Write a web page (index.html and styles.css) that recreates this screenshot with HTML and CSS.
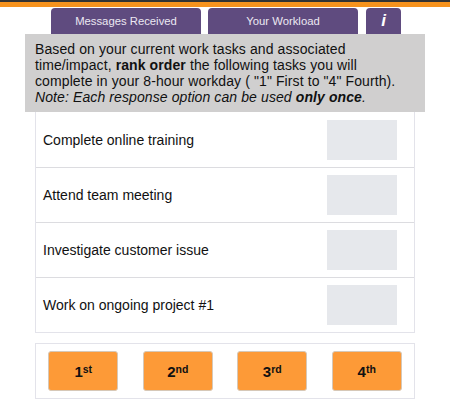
FILE: index.html
```html
<!DOCTYPE html>
<html>
<head>
<meta charset="utf-8">
<link rel="stylesheet" href="styles.css">
</head>
<body>
<div class="topbar"></div>
<nav class="tabs">
  <div class="tab tab-wide">Messages Received</div>
  <div class="tab tab-wide">Your Workload</div>
  <div class="tab tab-info">i</div>
</nav>
<div class="prompt">
  Based on your current work tasks and associated time/impact, <b>rank order</b> the following tasks you will complete in your 8-hour workday ( "1" First to "4" Fourth).<br>
  <i>Note: Each response option can be used <b>only once</b>.</i>
</div>
<div class="tasks">
  <div class="task"><span class="label">Complete online training</span><div class="drop"></div></div>
  <div class="task"><span class="label">Attend team meeting</span><div class="drop"></div></div>
  <div class="task"><span class="label">Investigate customer issue</span><div class="drop"></div></div>
  <div class="task"><span class="label">Work on ongoing project #1</span><div class="drop"></div></div>
</div>
<div class="options">
  <div class="opt">1<sup>st</sup></div>
  <div class="opt">2<sup>nd</sup></div>
  <div class="opt">3<sup>rd</sup></div>
  <div class="opt">4<sup>th</sup></div>
</div>
</body>
</html>
```

FILE: styles.css
```css
html, body {
  margin: 0;
  padding: 0;
  background: #ffffff;
  font-family: "Liberation Sans", Arial, sans-serif;
  color: #111111;
}
.topbar {
  height: 5px;
  border-top: 2px solid #333333;
  background: #f7931e;
}
.tabs {
  display: flex;
  margin: 1px 0 0 51px;
  height: 26px;
}
.tab {
  background: #5f4b7f;
  color: #ece8f2;
  border-radius: 4px 4px 0 0;
  display: flex;
  align-items: center;
  justify-content: center;
  font-size: 11.3px;
}
.tab-wide {
  width: 150px;
  margin-right: 7px;
}
.tab-wide + .tab-wide {
  margin-right: 8px;
}
.tab-info {
  width: 35px;
  font-size: 17px;
  font-weight: bold;
  font-style: italic;
  color: #ffffff;
}
.prompt {
  margin: 0 25px;
  background: #d0cfcf;
  padding: 7px 22px 7px 10px;
  font-size: 14px;
  line-height: 16px;
  height: 64px;
  letter-spacing: 0.1px;
}
.tasks {
  margin: 0 35px;
  border: 1px solid #e3e3ea;
  border-top: none;
}
.task {
  display: flex;
  align-items: center;
  justify-content: space-between;
  height: 54px;
  padding: 0 17px 0 7px;
  border-top: 1px solid #dcdce0;
  font-size: 14px;
}
.task:first-child {
  border-top: none;
  height: 55px;
}
.drop {
  width: 70px;
  height: 40px;
  background: #e6e8ec;
}
.options {
  margin: 10px 35px 0 35px;
  border: 1px solid #e3e3ea;
  height: 54px;
  display: grid;
  grid-template-columns: repeat(4, 1fr);
  justify-items: center;
  align-items: center;
}
.opt {
  box-sizing: border-box;
  width: 70px;
  height: 40px;
  background: #fd9a37;
  border: 1px solid #d6c8b8;
  border-radius: 3px;
  display: flex;
  align-items: center;
  justify-content: center;
  font-size: 15px;
  font-weight: bold;
  color: #111111;
}
.opt sup {
  font-size: 10.5px;
  line-height: 0;
  position: relative;
  top: -2px;
}
```
